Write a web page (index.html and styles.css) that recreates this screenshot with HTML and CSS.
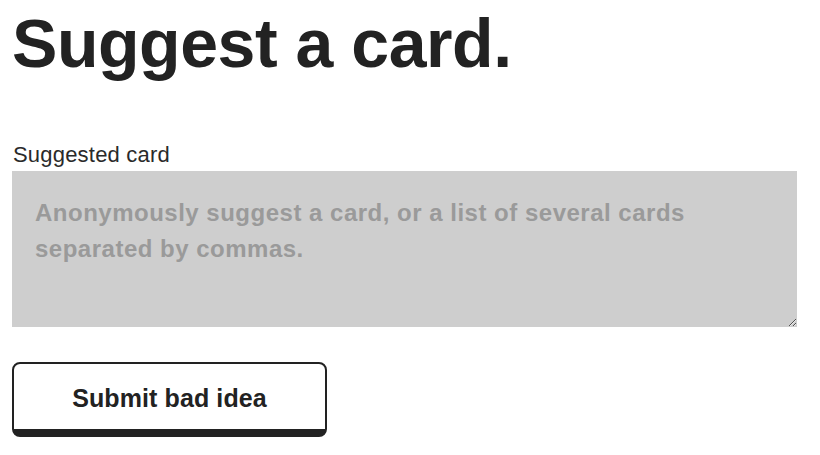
FILE: index.html
```html
<!DOCTYPE html>
<html>
<head>
<meta charset="utf-8">
<link rel="stylesheet" href="styles.css">
</head>
<body>
<main class="page">
  <h1 class="title">Suggest a card.</h1>
  <form class="form">
    <label class="label" for="card">Suggested card</label>
    <textarea id="card" class="field" placeholder="Anonymously suggest a card, or a list of several cards separated by commas."></textarea>
    <button type="button" class="submit">Submit bad idea</button>
  </form>
</main>
</body>
</html>
```
FILE: styles.css
```css
html, body {
  margin: 0;
  padding: 0;
  background: #ffffff;
}
body {
  font-family: "Liberation Sans", Arial, sans-serif;
  color: #222222;
}
.page {
  padding: 0 23px 0 12px;
}
.title {
  margin: 0;
  padding-top: 4px;
  font-size: 68px;
  line-height: 78px;
  font-weight: 700;
  color: #222222;
  letter-spacing: -0.45px;
}
.form {
  display: flex;
  flex-direction: column;
  align-items: flex-start;
  margin-top: 60px;
}
.label {
  font-size: 22px;
  line-height: 26px;
  letter-spacing: 0.2px;
  color: #2a2a2a;
  margin-bottom: 3px;
  padding-left: 1px;
}
.field {
  box-sizing: border-box;
  width: 785px;
  height: 156px;
  border: none;
  background: #cecece;
  margin: 0;
  padding: 24px 23px;
  font-family: "Liberation Sans", Arial, sans-serif;
  font-size: 24px;
  font-weight: 700;
  line-height: 36px;
  letter-spacing: 0.5px;
  color: #222;
  resize: vertical;
  outline: none;
}
.field::placeholder {
  color: #9a9a9a;
  opacity: 1;
}
.submit {
  box-sizing: border-box;
  margin-top: 35px;
  width: 315px;
  height: 75px;
  background: #fff;
  border: 2px solid #222;
  border-bottom-width: 8px;
  border-radius: 8px;
  font-family: "Liberation Sans", Arial, sans-serif;
  font-size: 25px;
  font-weight: 700;
  letter-spacing: 0.1px;
  color: #222;
  cursor: pointer;
  padding: 3px 0 0 0;
}
```
